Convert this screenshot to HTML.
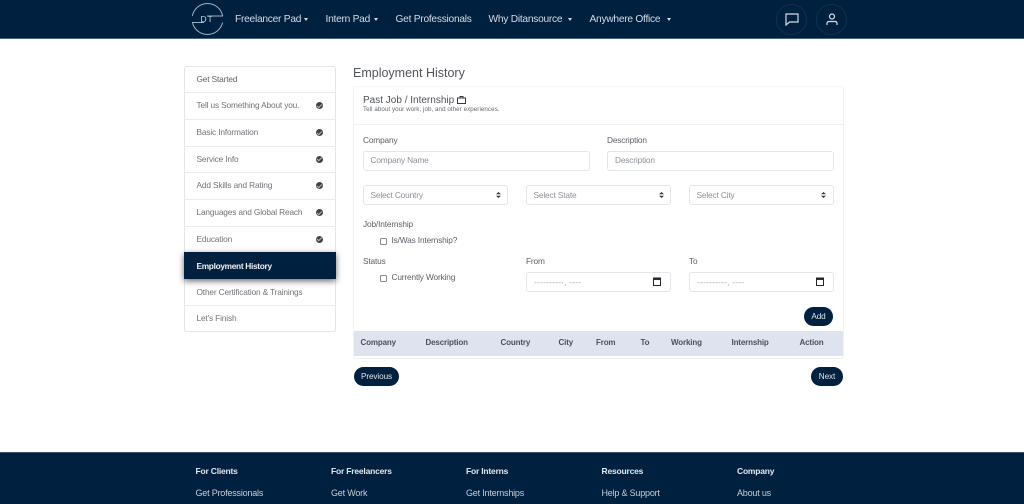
<!DOCTYPE html>
<html lang="en"><head><meta charset="utf-8"><title>Employment History</title>
<style>
*{box-sizing:border-box}
html,body{margin:0;padding:0;background:#fff}
body{width:1024px;height:504px;position:relative;overflow:hidden;font-family:"Liberation Sans",sans-serif;color:#55595f}
.t{position:absolute;white-space:nowrap;line-height:14px;font-size:8.5px}
.nav{position:absolute;left:0;top:0;width:1024px;height:39px;background:#00203f;border-bottom:1px solid #4a6480}
.foot{position:absolute;left:0;top:452px;width:1024px;height:52px;background:#00203f;border-top:1px solid #3a5470}
.n{color:#d5dce4;font-size:10.2px;top:13px;letter-spacing:-.25px}
.car{position:absolute;top:18px;width:0;height:0;border-left:2.5px solid transparent;border-right:2.5px solid transparent;border-top:3px solid #d5dce4}
.circ{position:absolute;top:3.500px;width:31px;height:31px;border:1px solid #12304f;border-radius:50%}
.side{position:absolute;left:184px;top:66px;width:152px;height:266px;border:1px solid #e6e6e6;border-radius:3px}
.d{position:absolute;left:184px;width:152px;height:1px;background:#ececec}
.s{left:196.5px;color:#6f7378;font-size:8.3px;letter-spacing:-.15px}
.chk{position:absolute;left:315.5px;width:7px;height:7px;border-radius:50%;background:#3e4348}
.chk::after{content:"";position:absolute;left:1.700px;top:1.500px;width:4px;height:2.200px;border-left:1px solid #b5b8bb;border-bottom:1px solid #b5b8bb;transform:rotate(-45deg)}
.act{position:absolute;left:184px;top:252px;width:152px;height:27px;background:#00203f;box-shadow:0 2px 6px rgba(0,0,0,.6)}
.card{position:absolute;left:353px;top:86px;width:491px;height:273px;border:1px solid #f1f1f1;border-top-color:#f6f6f6;border-radius:3px}
.f{position:absolute;height:20px;border:1px solid #e3e5e9;border-radius:3px;background:#fff}
.l{color:#5c6066;font-size:8.3px;letter-spacing:-.15px}
.p{color:#8b9097;font-size:8.3px;letter-spacing:-.15px}
.ud{position:absolute;width:5px;height:6px}
.cb{position:absolute;left:380px;width:7px;height:7px;border:1px solid #8a8a8a;border-radius:1.500px;background:#fff}
.th{position:absolute;left:354px;top:331px;width:489px;height:25px;background:#dfe3ef}
.h{color:#4c5157;font-size:8px;font-weight:bold;top:336px;letter-spacing:-.15px}
.b{position:absolute;height:19px;background:#00203f;border-radius:10px;color:#dfe5ec;font-size:8.2px;line-height:19px;text-align:center;letter-spacing:-.1px}
.fh{color:#e3e8ee;font-size:8.5px;font-weight:bold;top:463.5px;letter-spacing:-.2px}
.fl{color:#c6ced7;font-size:9px;top:486px;letter-spacing:-.2px}
</style></head><body>
<div class="nav"></div>
<svg style="position:absolute;left:190px;top:2px" width="35" height="35" viewBox="0 0 35 35" fill="none" stroke="#9fb2c4" stroke-width="1"><path d="M2.300 14A15.500 15.500 0 0 1 32.700 14"/><path d="M32.600 20.500A15.500 15.500 0 0 1 2.400 20.500"/><path d="M2 20.500H14M17 14H33"/></svg>
<div class="t" style="left:200.500px;top:12px;color:#c5d2de;font-size:8.500px;letter-spacing:.8px">DT</div>
<div class="t n" style="left:235px">Freelancer Pad</div><div class="car" style="left:303.500px"></div>
<div class="t n" style="left:325.500px">Intern Pad</div><div class="car" style="left:373.500px"></div>
<div class="t n" style="left:395.500px">Get Professionals</div>
<div class="t n" style="left:488.500px">Why Ditansource</div><div class="car" style="left:568px"></div>
<div class="t n" style="left:589.500px">Anywhere Office</div><div class="car" style="left:666.500px"></div>
<div class="circ" style="left:776px"></div><div class="circ" style="left:816px"></div>
<svg style="position:absolute;left:785px;top:13px" width="14" height="13" viewBox="0 0 14 13" fill="none" stroke="#d5dce4" stroke-width="1.200"><path d="M1 1H13V9H4.500L1 12Z"/></svg>
<svg style="position:absolute;left:826px;top:13px" width="12" height="13" viewBox="0 0 12 13" fill="none" stroke="#d5dce4" stroke-width="1.200"><circle cx="6" cy="3.500" r="2.500"/><path d="M1 12V10.500Q1 8.500 3 8.500H9Q11 8.500 11 10.500V12"/></svg>

<div class="side"></div>
<div class="d" style="top:92px"></div><div class="d" style="top:119px"></div><div class="d" style="top:146px"></div><div class="d" style="top:172px"></div><div class="d" style="top:199px"></div><div class="d" style="top:226px"></div><div class="d" style="top:305px"></div>
<div class="t s" style="top:72px;color:#5f6368">Get Started</div>
<div class="t s" style="top:98px">Tell us Something About you.</div><div class="chk" style="top:102px"></div>
<div class="t s" style="top:125px">Basic Information</div><div class="chk" style="top:129px"></div>
<div class="t s" style="top:152px">Service Info</div><div class="chk" style="top:155.500px"></div>
<div class="t s" style="top:178px">Add Skills and Rating</div><div class="chk" style="top:182px"></div>
<div class="t s" style="top:205px">Languages and Global Reach</div><div class="chk" style="top:209px"></div>
<div class="t s" style="top:232px">Education</div><div class="chk" style="top:235.500px"></div>
<div class="act"></div>
<div class="t s" style="top:259px;color:#f0f3f6;font-weight:bold;letter-spacing:-.3px">Employment History</div>
<div class="t s" style="top:285px">Other Certification &amp; Trainings</div>
<div class="t s" style="top:311px">Let's Finish</div>

<div class="t" style="left:353px;top:66px;font-size:12.500px;color:#50545a">Employment History</div>
<div class="card"></div>
<div class="d" style="left:354px;width:489px;top:124px;background:#f0f0f0"></div>
<div class="t" style="left:363px;top:93.500px;font-size:10px;color:#4f5359">Past Job / Internship</div>
<svg style="position:absolute;left:457px;top:96px" width="9" height="8" viewBox="0 0 9 8" fill="none" stroke="#33383e" stroke-width="1"><rect x=".5" y="2" width="8" height="5.500"/><path d="M3 2V.5H6V2"/></svg>
<div class="t" style="left:363px;top:103px;font-size:6.200px;color:#63676c;letter-spacing:.07px">Tell about your work, job, and other experiences.</div>

<div class="t l" style="left:363px;top:133px">Company</div>
<div class="f" style="left:363px;top:151px;width:227px"></div><div class="t p" style="left:370.500px;top:153px">Company Name</div>
<div class="t l" style="left:607px;top:133px">Description</div>
<div class="f" style="left:607px;top:151px;width:227px"></div><div class="t p" style="left:615px;top:153px">Description</div>

<div class="f" style="left:363px;top:185px;width:145px"></div><div class="t p" style="left:370.500px;top:187.500px">Select Country</div>
<div class="f" style="left:526px;top:185px;width:145px"></div><div class="t p" style="left:533.500px;top:187.500px">Select State</div>
<div class="f" style="left:689px;top:185px;width:145px"></div><div class="t p" style="left:696.500px;top:187.500px">Select City</div>
<svg class="ud" style="left:496px;top:192px" viewBox="0 0 6 8" preserveAspectRatio="none" fill="#33383e"><path d="M3 0L6 3H0ZM3 8L0 5H6Z"/></svg>
<svg class="ud" style="left:659px;top:192px" viewBox="0 0 6 8" preserveAspectRatio="none" fill="#33383e"><path d="M3 0L6 3H0ZM3 8L0 5H6Z"/></svg>
<svg class="ud" style="left:821px;top:192px" viewBox="0 0 6 8" preserveAspectRatio="none" fill="#33383e"><path d="M3 0L6 3H0ZM3 8L0 5H6Z"/></svg>

<div class="t l" style="left:363px;top:217px">Job/Internship</div>
<div class="cb" style="top:238px"></div>
<div class="t l" style="left:391.500px;top:233px">Is/Was Internship?</div>
<div class="t l" style="left:363px;top:254px">Status</div>
<div class="cb" style="top:275px"></div>
<div class="t l" style="left:391.500px;top:270px">Currently Working</div>
<div class="t l" style="left:526px;top:254px">From</div>
<div class="t l" style="left:689px;top:254px">To</div>
<div class="f" style="left:526px;top:272px;width:145px"></div><div class="t p" style="left:534px;top:275px;letter-spacing:.25px;color:#a0a4aa">----------, ----</div>
<div class="f" style="left:689px;top:272px;width:145px"></div><div class="t p" style="left:697px;top:275px;letter-spacing:.25px;color:#a0a4aa">----------, ----</div>
<svg style="position:absolute;left:653px;top:277px" width="8" height="9" viewBox="0 0 8 9" fill="none" stroke="#23272c"><rect x=".5" y="1" width="7" height="7.500"/><path d="M0 2.200H8" stroke-width="1.500"/></svg>
<svg style="position:absolute;left:816px;top:277px" width="8" height="9" viewBox="0 0 8 9" fill="none" stroke="#23272c"><rect x=".5" y="1" width="7" height="7.500"/><path d="M0 2.200H8" stroke-width="1.500"/></svg>

<div class="b" style="left:804px;top:307px;width:29px">Add</div>
<div class="th"></div>
<div class="t h" style="left:360.500px">Company</div>
<div class="t h" style="left:425.500px">Description</div>
<div class="t h" style="left:500.500px">Country</div>
<div class="t h" style="left:558.500px">City</div>
<div class="t h" style="left:596px">From</div>
<div class="t h" style="left:640.500px">To</div>
<div class="t h" style="left:671px">Working</div>
<div class="t h" style="left:731.500px">Internship</div>
<div class="t h" style="left:799.500px">Action</div>
<div class="b" style="left:354px;top:367px;width:45px">Previous</div>
<div class="b" style="left:811px;top:367px;width:32px">Next</div>

<div class="foot"></div>
<div class="t fh" style="left:195.500px">For Clients</div>
<div class="t fh" style="left:331px">For Freelancers</div>
<div class="t fh" style="left:466px">For Interns</div>
<div class="t fh" style="left:601.500px">Resources</div>
<div class="t fh" style="left:737px">Company</div>
<div class="t fl" style="left:195.500px">Get Professionals</div>
<div class="t fl" style="left:331px">Get Work</div>
<div class="t fl" style="left:466px">Get Internships</div>
<div class="t fl" style="left:601.500px">Help &amp; Support</div>
<div class="t fl" style="left:737px">About us</div>
</body></html>
